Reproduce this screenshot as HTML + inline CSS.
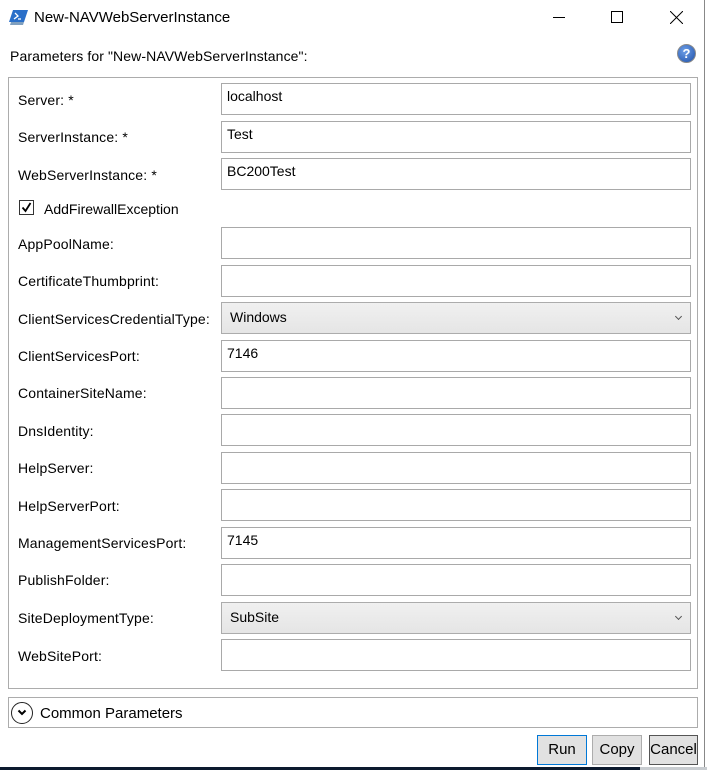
<!DOCTYPE html>
<html><head><meta charset="utf-8"><style>
*{margin:0;padding:0;box-sizing:border-box}
body{width:707px;height:770px;background:#fff;position:relative;overflow:hidden;font-family:"Liberation Sans",sans-serif;font-size:14px;color:#000}
.a{position:absolute;white-space:nowrap}
.in{position:absolute;left:221px;width:470px;height:32px;border:1px solid #a9a9a9;background:#fff;padding:4px 0 0 5px;font-size:14px}
.cb{position:absolute;left:221px;width:470px;height:32px;border:1px solid #acacac;background:linear-gradient(#f0f0f0,#e5e5e5);padding:6px 0 0 8px;font-size:14px}
.cb:after{content:"";position:absolute;right:9px;top:11px;width:4px;height:4px;border-right:1px solid #555;border-bottom:1px solid #555;transform:rotate(45deg)}
.lb{position:absolute;left:18px;font-size:14px;letter-spacing:0.15px}
.btn{position:absolute;top:735px;height:30px;border:1px solid #adadad;background:#e1e1e1;font-size:15px;text-align:center;line-height:28px}
</style></head><body>
<svg class="a" style="left:9px;top:9px" width="19" height="17" viewBox="0 0 19 17"><path d="M4 1H19L15 13H0Z" fill="#2a6fc9"/><path d="M2 13H15L14 16H1Z" fill="#7f9fbf"/><path d="M6 4L9 7L5 10" stroke="#fff" stroke-width="1.3" fill="none"/><path d="M9 10H12" stroke="#fff" stroke-width="1.3"/></svg>
<div class="a" style="left:34px;top:9px;font-size:15px">New-NAVWebServerInstance</div>
<div class="a" style="left:553px;top:17px;width:12px;height:1px;background:#000"></div>
<div class="a" style="left:611px;top:11px;width:12px;height:12px;border:1px solid #000"></div>
<svg class="a" style="left:670px;top:11px" width="13" height="13"><path d="M0 0L13 13M13 0L0 13" stroke="#000" stroke-width="1"/></svg>
<div class="a" style="left:704px;top:0;width:1px;height:767px;background:#888"></div>
<div class="a" style="left:10px;top:48px;font-size:14px;letter-spacing:0.1px">Parameters for "New-NAVWebServerInstance":</div>
<div class="a" style="left:677px;top:44px;width:19px;height:19px;border-radius:50%;background:radial-gradient(circle at 40% 35%,#6fa0e8,#1d4fa8);border:1px solid #8a8a8a;color:#fff;font-weight:bold;font-size:13px;text-align:center;line-height:17px">?</div>
<div class="a" style="left:8px;top:77px;width:690px;height:612px;border:1px solid #acacac"></div>

<div class="lb" style="top:92px">Server: *</div><div class="in" style="top:83px">localhost</div>
<div class="lb" style="top:129px">ServerInstance: *</div><div class="in" style="top:121px">Test</div>
<div class="lb" style="top:167px">WebServerInstance: *</div><div class="in" style="top:158px">BC200Test</div>
<div class="a" style="left:19px;top:200px;width:15px;height:15px;border:1px solid #333;background:#fff"></div>
<svg class="a" style="left:21px;top:202px" width="11" height="11"><path d="M1.5 5.5L4.5 9L9.5 1" stroke="#000" stroke-width="1.8" fill="none"/></svg>
<div class="a" style="left:44px;top:201px">AddFirewallException</div>
<div class="lb" style="top:236px">AppPoolName:</div><div class="in" style="top:227px"></div>
<div class="lb" style="top:273px">CertificateThumbprint:</div><div class="in" style="top:265px"></div>
<div class="lb" style="top:311px">ClientServicesCredentialType:</div><div class="cb" style="top:302px">Windows</div>
<div class="lb" style="top:348px">ClientServicesPort:</div><div class="in" style="top:340px">7146</div>
<div class="lb" style="top:385px">ContainerSiteName:</div><div class="in" style="top:377px"></div>
<div class="lb" style="top:423px">DnsIdentity:</div><div class="in" style="top:414px"></div>
<div class="lb" style="top:460px">HelpServer:</div><div class="in" style="top:452px"></div>
<div class="lb" style="top:498px">HelpServerPort:</div><div class="in" style="top:489px"></div>
<div class="lb" style="top:535px">ManagementServicesPort:</div><div class="in" style="top:527px">7145</div>
<div class="lb" style="top:572px">PublishFolder:</div><div class="in" style="top:564px"></div>
<div class="lb" style="top:610px">SiteDeploymentType:</div><div class="cb" style="top:602px">SubSite</div>
<div class="lb" style="top:648px">WebSitePort:</div><div class="in" style="top:639px"></div>

<div class="a" style="left:8px;top:697px;width:690px;height:31px;border:1px solid #acacac"></div>
<div class="a" style="left:11px;top:702px;width:22px;height:22px;border:1.5px solid #222;border-radius:50%"></div>
<svg class="a" style="left:16px;top:708px" width="12" height="10"><path d="M2.5 2.5L6 6L9.5 2.5" stroke="#000" stroke-width="2" fill="none"/></svg>
<div class="a" style="left:40px;top:705px;font-size:15px">Common Parameters</div>

<div class="btn" style="left:537px;width:50px;border-color:#0078d7">Run</div>
<div class="btn" style="left:592px;width:50px">Copy</div>
<div class="btn" style="left:649px;width:49px;border-color:#555">Cancel</div>
<div class="a" style="left:0;top:767px;width:640px;height:3px;background:#0c1a2e"></div>
<div class="a" style="left:640px;top:767px;width:67px;height:3px;background:#c8ccd0"></div>
</body></html>
